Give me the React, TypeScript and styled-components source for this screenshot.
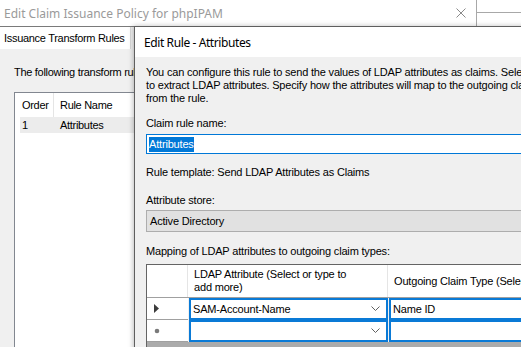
import React from 'react';
import styled, {createGlobalStyle} from "styled-components";

const GlobalStyle = createGlobalStyle`
  html, body {
    margin: 0;
    padding: 0;
    background: #f0f0f0;
  }
  body {
    font-family: "Liberation Sans", Arial, sans-serif;
    font-size: 11px;
    color: #000;
  }
`

const Desktop = styled.div`
  position: relative;
  width: 521px;
  height: 347px;
  overflow: hidden;
  background: #f0f0f0;
`

// ---- window behind ----
const BackWindow = styled.div`
  display: flex;
  flex-direction: column;
  height: 100%;
`

const BackTitleBar = styled.div`
  display: flex;
  align-items: center;
  height: 26px;
  background: #fff;
  border-bottom: 1px solid #7a7a7a;
`

const BackTitle = styled.div`
  flex: 1;
  padding-left: 4px;
  font-family: "Noto Sans", "Open Sans", sans-serif;
  font-size: 12px;
  color: #9a9a9a;
  white-space: nowrap;
`

const CloseButton = styled.div`
  display: flex;
  align-items: center;
  justify-content: center;
  width: 30px;
  height: 100%;
`

const NeighbourEdge = styled.div`
  align-self: stretch;
  width: 44px;
  border-left: 1px solid #a8a8a8;
  background: linear-gradient(#a8a8a8, #a8a8a8) 0 12px / 100% 1px no-repeat;
`

const TabStrip = styled.div`
  display: flex;
  height: 22px;
`

const Tab = styled.div`
  display: flex;
  align-items: center;
  width: 126px;
  padding-left: 4px;
  background: #fff;
  border-right: 1px solid #d9d9d9;
  letter-spacing: -0.3px;
  white-space: nowrap;
`

const TabPage = styled.div`
  flex: 1;
  display: flex;
  flex-direction: column;
  padding-left: 14px;
`

const Intro = styled.div`
  margin-top: 17px;
  line-height: 13px;
  letter-spacing: -0.3px;
  white-space: nowrap;
`

const RuleList = styled.div`
  flex: 1;
  margin-top: 13px;
  padding-left: 5px;
  background: #fff;
  border: 1px solid #828790;
  border-right: none;
  border-bottom: none;
`

const ListLine = styled.div<{ $selected?: boolean }>`
  display: flex;
  align-items: center;
  height: ${p => p.$selected ? '16px' : '24px'};
  background: ${p => p.$selected ? '#ececec' : 'transparent'};
  letter-spacing: -0.3px;
`

const ListCell = styled.div<{ $width?: number; $sep?: boolean }>`
  display: flex;
  align-items: center;
  align-self: stretch;
  width: ${p => p.$width ? `${p.$width}px` : 'auto'};
  padding-left: ${p => p.$width ? '2px' : '6px'};
  border-right: ${p => p.$sep ? '1px solid #e5e5e5' : 'none'};
  white-space: nowrap;
`

// ---- front dialog ----
const RuleDialog = styled.div`
  position: absolute;
  left: 134px;
  top: 26px;
  width: 460px;
  height: 360px;
  background: #f0f0f0;
  border: 1px solid #5f5f5f;
  box-shadow: -1px 0 5px rgba(0, 0, 0, 0.25);
`

const DialogTitleBar = styled.div`
  display: flex;
  align-items: center;
  height: 30px;
  padding-left: 9px;
  background: #fff;
  font-family: "Noto Sans", "Open Sans", sans-serif;
  font-size: 12px;
  letter-spacing: -0.4px;
  white-space: nowrap;
`

const DialogBody = styled.div`
  display: flex;
  flex-direction: column;
  padding-left: 11px;
  letter-spacing: -0.18px;
`

const Label = styled.div<{ $gap: number }>`
  margin-top: ${p => p.$gap}px;
  line-height: 13px;
  white-space: nowrap;
`

const NameBox = styled.div`
  display: flex;
  align-items: center;
  height: 18px;
  margin-top: 4px;
  padding-left: 2px;
  background: #fff;
  border: 1px solid #0078d7;
  border-right: none;
`

const Selected = styled.span`
  padding: 1px 0;
  line-height: 13px;
  background: #0078d7;
  color: #fff;
`

const StoreCombo = styled.div`
  display: flex;
  align-items: center;
  height: 20px;
  margin-top: 3px;
  padding-left: 3px;
  background: #e1e1e1;
  border: 1px solid #adadad;
  border-right: none;
  white-space: nowrap;
`

const MappingGrid = styled.div`
  display: flex;
  flex-direction: column;
  height: 100px;
  margin-top: 6px;
  background: #ababab;
  border: 1px solid #646464;
  border-right: none;
`

const GridRow = styled.div<{ $head?: boolean }>`
  display: grid;
  grid-template-columns: 41px 199px 200px;
  column-gap: 1px;
  height: ${p => p.$head ? '32px' : '22px'};
  background: ${p => p.$head ? '#fff' : '#f0f0f0'};
  border-bottom: ${p => p.$head ? '1px solid #a0a0a0' : 'none'};
`

const HeadCell = styled.div<{ $sep?: boolean }>`
  display: flex;
  align-items: center;
  padding-left: 5px;
  line-height: 13px;
  border-right: ${p => p.$sep ? '1px solid #e5e5e5' : 'none'};
  white-space: nowrap;
`

const RowHeader = styled.div`
  display: flex;
  align-items: center;
  padding-left: 7px;
  background: #fff;
  border-bottom: 1px solid #a0a0a0;
`

const EditCell = styled.div`
  display: flex;
  align-items: center;
  padding: 0 6px 0 2px;
  background: #fff;
  border: 2px solid #0a7ad6;
  white-space: nowrap;
`

const ChevronBox = styled.span`
  display: flex;
  margin-left: auto;
`

const Chevron = () => (
  <ChevronBox>
    <svg width="9" height="6" viewBox="0 0 9 6">
      <polyline points="0.5,0.5 4.5,4.5 8.5,0.5" fill="none" stroke="#606060" strokeWidth="1"/>
    </svg>
  </ChevronBox>
)

const rows = [
  {attribute: 'SAM-Account-Name', claim: 'Name ID', current: true},
  {attribute: '', claim: '', current: false},
]

export default function App() {
  return (
    <>
      <GlobalStyle/>
      <Desktop>
        <BackWindow>
          <BackTitleBar>
            <BackTitle>Edit Claim Issuance Policy for phpIPAM</BackTitle>
            <CloseButton>
              <svg width="10" height="10" viewBox="0 0 10 10">
                <path d="M0.5 0.5 L9.5 9.5 M9.5 0.5 L0.5 9.5" stroke="#8a8a8a" strokeWidth="1"/>
              </svg>
            </CloseButton>
            <NeighbourEdge/>
          </BackTitleBar>
          <TabStrip>
            <Tab>Issuance Transform Rules</Tab>
          </TabStrip>
          <TabPage>
            <Intro>The following transform rules specify the claims that will be sent to the relying party.</Intro>
            <RuleList>
              <ListLine>
                <ListCell $width={31} $sep>Order</ListCell>
                <ListCell>Rule Name</ListCell>
              </ListLine>
              <ListLine $selected>
                <ListCell $width={32}>1</ListCell>
                <ListCell>Attributes</ListCell>
              </ListLine>
            </RuleList>
          </TabPage>
        </BackWindow>

        <RuleDialog>
          <DialogTitleBar>Edit Rule - Attributes</DialogTitleBar>
          <DialogBody>
            <Label $gap={9}>
              You can configure this rule to send the values of LDAP attributes as claims. Select an attribute store from which<br/>
              to extract LDAP attributes. Specify how the attributes will map to the outgoing claim types that will be issued<br/>
              from the rule.
            </Label>
            <Label $gap={12}>Claim rule name:</Label>
            <NameBox><Selected>Attributes</Selected></NameBox>
            <Label $gap={12}>Rule template: Send LDAP Attributes as Claims</Label>
            <Label $gap={15}>Attribute store:</Label>
            <StoreCombo>Active Directory</StoreCombo>
            <Label $gap={13}>Mapping of LDAP attributes to outgoing claim types:</Label>
            <MappingGrid>
              <GridRow $head>
                <HeadCell $sep/>
                <HeadCell $sep>LDAP Attribute (Select or type to<br/>add more)</HeadCell>
                <HeadCell>Outgoing Claim Type (Select or type to add more)</HeadCell>
              </GridRow>
              {rows.map((row, i) => (
                <GridRow key={i}>
                  <RowHeader>
                    {row.current ? (
                      <svg width="5" height="9" viewBox="0 0 5 9"><polygon points="0,0 5,4.5 0,9" fill="#3c3c3c"/></svg>
                    ) : (
                      <svg width="6" height="6" viewBox="0 0 6 6"><circle cx="3" cy="3" r="2.3" fill="#7a7a7a"/></svg>
                    )}
                  </RowHeader>
                  <EditCell>{row.attribute}<Chevron/></EditCell>
                  <EditCell>{row.claim}</EditCell>
                </GridRow>
              ))}
            </MappingGrid>
          </DialogBody>
        </RuleDialog>
      </Desktop>
    </>
  );
}
